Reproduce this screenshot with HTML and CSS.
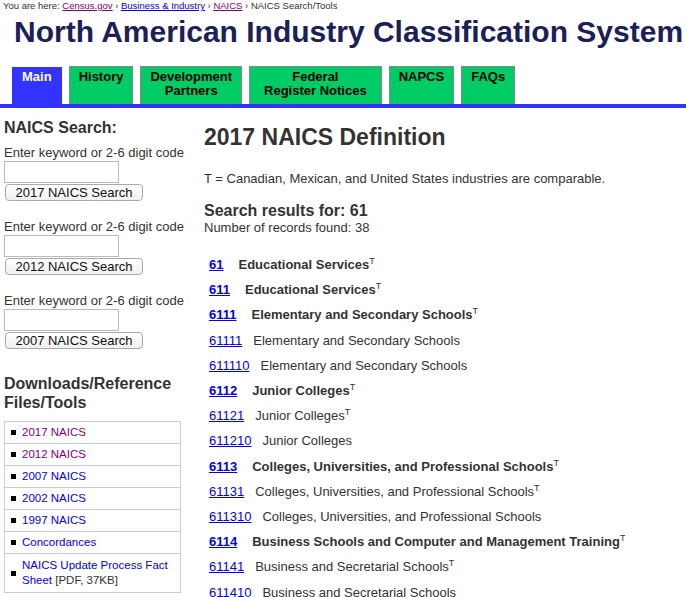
FILE: index.html
```html
<!DOCTYPE html>
<html>
<head>
    <title>NAICS Search/Tools</title>
    <meta charset="utf-8">
    <link rel="stylesheet" href="styles.css">
</head>
<body>
    <div class="breadcrumb">
        You are here: <a class="visited" href="#">Census.gov</a> ›
        <a href="#">Business &amp; Industry</a> ›
        <a class="visited" href="#">NAICS</a> › NAICS Search/Tools
    </div>

    <h1 class="site-title">North American Industry Classification System</h1>

    <!-- Tab bar -->
    <div class="tabs">
        <a class="tab tab-main" href="#">Main</a>
        <a class="tab" href="#">History</a>
        <a class="tab" href="#">Development<br>Partners</a>
        <a class="tab tab-wide" href="#">Federal<br>Register Notices</a>
        <a class="tab" href="#">NAPCS</a>
        <a class="tab" href="#">FAQs</a>
    </div>

    <div class="page">
        <div class="sidebar">
            <h3 class="side-heading">NAICS Search:</h3>

            <form class="search-form">
                <label>Enter keyword or 2-6 digit code</label>
                <input class="search-input" type="text">
                <button class="search-btn" type="button">2017 NAICS Search</button>
            </form>
            <form class="search-form">
                <label>Enter keyword or 2-6 digit code</label>
                <input class="search-input" type="text">
                <button class="search-btn" type="button">2012 NAICS Search</button>
            </form>
            <form class="search-form">
                <label>Enter keyword or 2-6 digit code</label>
                <input class="search-input" type="text">
                <button class="search-btn" type="button">2007 NAICS Search</button>
            </form>

            <h3 class="side-heading downloads-heading">Downloads/Reference Files/Tools</h3>
            <ul class="downloads">
                <li><a class="visited" href="#">2017 NAICS</a></li>
                <li><a class="visited" href="#">2012 NAICS</a></li>
                <li><a href="#">2007 NAICS</a></li>
                <li><a href="#">2002 NAICS</a></li>
                <li><a href="#">1997 NAICS</a></li>
                <li><a href="#">Concordances</a></li>
                <li class="two-line"><span><a href="#">NAICS Update Process Fact Sheet</a> [PDF, 37KB]</span></li>
            </ul>
        </div>

        <div class="content">
            <h2 class="page-title">2017 NAICS Definition</h2>
            <p class="note">T = Canadian, Mexican, and United States industries are comparable.</p>

            <h3 class="results-title">Search results for: 61</h3>
            <p class="records">Number of records found: 38</p>

            <ul class="results">
                <li class="major"><a class="code" href="#">61</a><span class="name">Educational Services<sup class="t">T</sup></span></li>
                <li class="major"><a class="code" href="#">611</a><span class="name">Educational Services<sup class="t">T</sup></span></li>
                <li class="major"><a class="code" href="#">6111</a><span class="name">Elementary and Secondary Schools<sup class="t">T</sup></span></li>
                <li><a class="code" href="#">61111</a><span class="name">Elementary and Secondary Schools</span></li>
                <li><a class="code" href="#">611110</a><span class="name">Elementary and Secondary Schools</span></li>
                <li class="major"><a class="code" href="#">6112</a><span class="name">Junior Colleges<sup class="t">T</sup></span></li>
                <li><a class="code" href="#">61121</a><span class="name">Junior Colleges<sup class="t">T</sup></span></li>
                <li><a class="code" href="#">611210</a><span class="name">Junior Colleges</span></li>
                <li class="major"><a class="code" href="#">6113</a><span class="name">Colleges, Universities, and Professional Schools<sup class="t">T</sup></span></li>
                <li><a class="code" href="#">61131</a><span class="name">Colleges, Universities, and Professional Schools<sup class="t">T</sup></span></li>
                <li><a class="code" href="#">611310</a><span class="name">Colleges, Universities, and Professional Schools</span></li>
                <li class="major"><a class="code" href="#">6114</a><span class="name">Business Schools and Computer and Management Training<sup class="t">T</sup></span></li>
                <li><a class="code" href="#">61141</a><span class="name">Business and Secretarial Schools<sup class="t">T</sup></span></li>
                <li><a class="code" href="#">611410</a><span class="name">Business and Secretarial Schools</span></li>
            </ul>
        </div>
    </div>
</body>
</html>
```

FILE: styles.css
```css
body {
    margin: 0;
    background: #fff;
    color: #333;
    font-family: "Liberation Sans", Arial, Helvetica, sans-serif;
    font-size: 13px;
}

a {
    color: #0000ee;
}

a.visited {
    color: #800080;
}

.breadcrumb {
    padding-left: 3px;
    font-size: 9.5px;
    line-height: 12px;
}

.site-title {
    margin: 3px 0 0 14px;
    font-size: 30px;
    line-height: 34px;
    font-weight: bold;
    color: #1c2058;
}

/* tabs */
.tabs {
    display: flex;
    align-items: flex-end;
    gap: 7px;
    margin-top: 17px;
    padding-left: 12px;
    border-bottom: 4px solid #3333ff;
}

.tab {
    box-sizing: border-box;
    height: 38px;
    padding: 3px 9px 0;
    background: #00cc66;
    border: 1px solid #888;
    border-bottom: 0;
    color: #000;
    font-size: 13px;
    font-weight: bold;
    line-height: 14px;
    text-align: center;
    text-decoration: none;
}

.tab-main {
    height: 37px;
    padding-top: 2px;
    background: #3333ff;
    border-color: #3333ff;
    color: #fff;
}

.tab-wide {
    padding: 3px 14px 0;
}

/* page columns */
.page {
    display: flex;
    align-items: flex-start;
}

.sidebar {
    flex: none;
    width: 177px;
    margin-left: 4px;
}

.content {
    flex: 1;
    margin-left: 23px;
}

.side-heading {
    margin: 10px 0 0;
    font-size: 16px;
    line-height: 19px;
    font-weight: bold;
}

.search-form {
    margin: 8px 0 18px;
}

.search-form label {
    display: block;
    line-height: 15px;
    white-space: nowrap;
}

.search-input {
    display: block;
    box-sizing: border-box;
    width: 115px;
    height: 22px;
    margin: 1px 0 0;
    padding: 0 3px;
    border: 1px solid #bbb;
}

.search-btn {
    display: block;
    box-sizing: border-box;
    width: 138px;
    height: 17px;
    margin: 1px 0 0 1px;
    padding: 0;
    border: 1px solid #aaa;
    border-radius: 4px;
    background: linear-gradient(#fff, #f0f0f0);
    color: #111;
    font-family: "Liberation Sans", Arial, Helvetica, sans-serif;
    font-size: 13px;
    line-height: 15px;
}

.downloads-heading {
    margin: 25px 0 9px;
}

.downloads {
    list-style: none;
    margin: 0;
    padding: 0;
    border: 1px solid #ccc;
}

.downloads li {
    display: flex;
    align-items: center;
    padding: 3px 6px;
    border-top: 1px solid #ccc;
    font-size: 11.5px;
    line-height: 15px;
}

.downloads li:first-child {
    border-top: 0;
}

.downloads li.two-line {
    padding: 4px 6px;
}

.downloads li::before {
    content: "";
    flex: none;
    width: 5px;
    height: 5px;
    margin-right: 6px;
    background: #000;
}

.downloads a {
    text-decoration: none;
}

/* main content */
.page-title {
    margin: 16px 0 0;
    font-size: 23px;
    line-height: 27px;
    font-weight: bold;
}

.note {
    margin: 20px 0 0;
    line-height: 15px;
}

.results-title {
    margin: 15px 0 0;
    font-size: 16px;
    line-height: 19px;
    font-weight: bold;
}

.records {
    margin: 0;
    line-height: 15px;
}

.results {
    list-style: none;
    margin: 17px 0 0;
    padding: 0 0 0 5px;
}

.results li {
    padding: 5px 0;
    line-height: 15.2px;
    white-space: nowrap;
}

.code {
    margin-right: 11px;
}

.major .code {
    margin-right: 15px;
    font-weight: bold;
}

.major .name {
    font-weight: bold;
}

.t {
    font-size: 9px;
    font-weight: normal;
    line-height: 0;
    vertical-align: 5px;
}
```
